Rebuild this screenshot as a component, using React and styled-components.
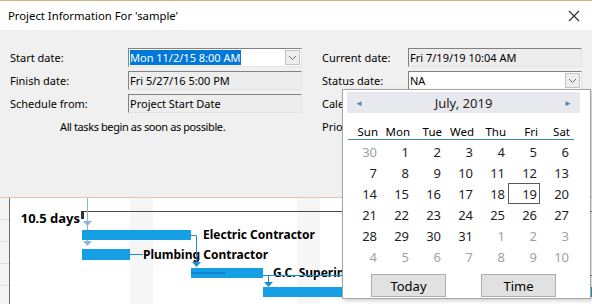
import styled, { createGlobalStyle } from 'styled-components';

const GlobalStyle = createGlobalStyle`
  html, body {
    margin: 0;
    padding: 0;
    background: #ffffff;
  }
  body {
    font-family: 'Noto Sans', 'Open Sans', sans-serif;
    font-size: 11px;
    color: #000000;
  }
`;

const Page = styled.div`
  position: relative;
  width: 592px;
  height: 304px;
  overflow: hidden;
  display: flex;
  flex-direction: column;
  background: #ffffff;
`;

const TopEdge = styled.div`
  height: 1px;
  background: #cdb57c;
`;

const TitleBar = styled.div`
  height: 29px;
  display: flex;
  align-items: center;
  justify-content: space-between;
  padding: 0 8px 0 8px;
  background: #ffffff;
`;

const Title = styled.span`
  font-size: 11.3px;
  color: #000000;
`;

const CloseButton = styled.div`
  width: 20px;
  height: 20px;
  display: flex;
  align-items: center;
  justify-content: center;
`;

const Body = styled.div`
  height: 151px;
  background: #f0f0f0;
  border-bottom: 1px solid #e6c3ad;
  padding: 16px 0 0 10px;
  display: flex;
  gap: 20px;
`;

const Column = styled.div`
  width: ${props => props.$width}px;
  display: flex;
  flex-direction: column;
`;

const Row = styled.div`
  height: 23px;
  display: flex;
  align-items: center;
`;

const Label = styled.div`
  width: ${props => props.$width}px;
  flex: none;
  white-space: nowrap;
`;

const Field = styled.div`
  box-sizing: border-box;
  width: 174px;
  height: 19px;
  display: flex;
  align-items: center;
  padding-left: 1px;
  border-top: 1px solid #828282;
  border-left: 1px solid #828282;
  border-right: 1px solid #e3e3e3;
  border-bottom: 1px solid #e3e3e3;
  background: ${props => (props.$disabled ? '#ededed' : '#ffffff')};
  white-space: nowrap;
`;

const FieldText = styled.span`
  flex: 1;
  overflow: hidden;
`;

const Selected = styled.span`
  background: #0078d7;
  color: #ffffff;
  padding: 0 1px 1px 0;
`;

const DropButton = styled.div`
  box-sizing: border-box;
  width: 15px;
  height: 15px;
  margin-right: 1px;
  border: 1px solid #c4c4c4;
  background: #eeeeee;
  display: flex;
  align-items: center;
  justify-content: center;
`;

const Note = styled.div`
  height: 23px;
  display: flex;
  align-items: center;
  padding-left: 50px;
  white-space: nowrap;
  letter-spacing: -0.4px;
`;

const Gantt = styled.div`
  flex: 1;
  display: flex;
  background: #ffffff;
`;

const GridStub = styled.div`
  width: 9px;
  flex: none;
  border-right: 1px solid #6b6b6b;
  background: repeating-linear-gradient(
    to bottom,
    #f4f4f4 0px,
    #f4f4f4 21px,
    #dedede 21px,
    #dedede 22px
  );
`;

const Chart = styled.svg`
  display: block;
  flex: 1;
`;

const Popup = styled.div`
  position: absolute;
  left: 342px;
  top: 89px;
  box-sizing: border-box;
  width: 249px;
  height: 210px;
  border: 1px solid #a5a5a5;
  background: #ffffff;
  box-shadow: 2px 2px 4px rgba(0, 0, 0, 0.18);
  padding: 2px 0 0 4px;
  font-size: 13px;
`;

const CalHeader = styled.div`
  width: 233px;
  height: 21px;
  background: #e8e9ee;
  display: flex;
  align-items: center;
  justify-content: space-between;
  padding: 0 8px;
  box-sizing: border-box;
  color: #1e1e1e;
`;

const Arrow = styled.span`
  font-size: 8px;
  color: #5a82b4;
`;

const DayNames = styled.div`
  margin: 11px 0 0 1px;
  width: 226px;
  height: 15px;
  border-bottom: 1px solid #3d8aa1;
  display: grid;
  grid-template-columns: repeat(7, 32px);
  align-items: center;
  font-size: 11.5px;
`;

const DayName = styled.div`
  text-align: right;
  padding-right: 2px;
  line-height: 15px;
`;

const DaysGrid = styled.div`
  margin: 1px 0 0 1px;
  display: grid;
  grid-template-columns: repeat(7, 32px);
  grid-auto-rows: 21px;
`;

const Day = styled.div`
  box-sizing: border-box;
  display: flex;
  align-items: center;
  justify-content: flex-end;
  padding-right: 2px;
  color: ${props => (props.$muted ? '#a0a0a0' : '#1e1e1e')};
  border: 1px solid ${props => (props.$current ? '#5a5a5a' : 'transparent')};
`;

const ButtonRow = styled.div`
  margin: 7px 0 0 24px;
  display: flex;
  gap: 35px;
`;

const Button = styled.div`
  box-sizing: border-box;
  width: 75px;
  height: 23px;
  border: 1px solid #adadad;
  background: #e1e1e1;
  display: flex;
  align-items: center;
  justify-content: center;
`;

const Chevron = () => (
  <svg width="9" height="6" viewBox="0 0 9 6">
    <path d="M1 1 L4.5 4.5 L8 1" fill="none" stroke="#6d6d6d" strokeWidth="1" />
  </svg>
);

const dayNames = ['Sun', 'Mon', 'Tue', 'Wed', 'Thu', 'Fri', 'Sat'];

function buildDays() {
  const days = [{ n: 30, muted: true }];
  for (let i = 1; i <= 31; i++) days.push({ n: i, muted: false, current: i === 19 });
  for (let i = 1; i <= 10; i++) days.push({ n: i, muted: true });
  return days;
}

const barColor = '#179fe6';
const linkColor = '#1a8fd6';
const labelFont = "'Noto Sans', sans-serif";

function GanttChart() {
  return (
    <Chart width="582" height="106" viewBox="0 0 582 106">
      <rect x="120" y="0" width="23" height="106" fill="#f6f6f6" />
      <rect x="287" y="0" width="23" height="106" fill="#f6f6f6" />
      <line x1="72" y1="13.5" x2="582" y2="13.5" stroke="#4a4a4a" strokeWidth="1" />
      <rect x="71" y="13" width="3" height="8" fill="#333333" />
      <text x="70" y="25" textAnchor="end" fontSize="13" fontWeight="700" fontFamily={labelFont}>
        10.5 days
      </text>

      <line x1="77.5" y1="0" x2="77.5" y2="45" stroke="#8db4e0" strokeWidth="1" />
      <polygon points="73,23 82,23 77.5,28" fill="#8db4e0" />
      <polygon points="73,43 82,43 77.5,48" fill="#8db4e0" />

      <rect x="72" y="32" width="109" height="10" fill={barColor} />
      <text x="193" y="41" fontSize="12" fontWeight="700" fontFamily={labelFont}>
        Electric Contractor
      </text>

      <rect x="72" y="51" width="48" height="11" fill={barColor} />
      <line x1="120" y1="56.5" x2="133" y2="56.5" stroke={linkColor} strokeWidth="1" />
      <text x="133" y="61" fontSize="12" fontWeight="700" fontFamily={labelFont}>
        Plumbing Contractor
      </text>

      <polyline points="181,37.5 186.5,37.5 186.5,64" fill="none" stroke={linkColor} strokeWidth="1" />
      <polygon points="182,64 191,64 186.5,69" fill={linkColor} />

      <rect x="181" y="70" width="72" height="10" fill={barColor} />
      <rect x="181" y="74" width="34" height="2" fill="#0f86cc" />
      <text x="263" y="79" fontSize="12" fontWeight="700" fontFamily={labelFont}>
        G.C. Superintendent
      </text>
      <line x1="253" y1="77.5" x2="582" y2="77.5" stroke={linkColor} strokeWidth="1" />
      <line x1="258.5" y1="77.5" x2="258.5" y2="84" stroke={linkColor} strokeWidth="1" />
      <polygon points="254,84 263,84 258.5,89" fill={linkColor} />

      <rect x="253" y="89" width="329" height="10" fill={barColor} />
    </Chart>
  );
}

export default function App() {
  const days = buildDays();

  return (
    <>
      <GlobalStyle />
      <Page>
        <TopEdge />
        <TitleBar>
          <Title>Project Information For 'sample'</Title>
          <CloseButton>
            <svg width="12" height="12" viewBox="0 0 12 12">
              <path d="M1 1 L11 11 M11 1 L1 11" stroke="#2b2b2b" strokeWidth="1.1" />
            </svg>
          </CloseButton>
        </TitleBar>

        <Body>
          <Column $width={292}>
            <Row>
              <Label $width={118}>Start date:</Label>
              <Field>
                <FieldText>
                  <Selected>Mon 11/2/15 8:00 AM</Selected>
                </FieldText>
                <DropButton>
                  <Chevron />
                </DropButton>
              </Field>
            </Row>
            <Row>
              <Label $width={118}>Finish date:</Label>
              <Field $disabled>
                <FieldText>Fri 5/27/16 5:00 PM</FieldText>
              </Field>
            </Row>
            <Row>
              <Label $width={118}>Schedule from:</Label>
              <Field $disabled>
                <FieldText>Project Start Date</FieldText>
              </Field>
            </Row>
            <Note>All tasks begin as soon as possible.</Note>
          </Column>

          <Column $width={260}>
            <Row>
              <Label $width={86}>Current date:</Label>
              <Field $disabled>
                <FieldText>Fri 7/19/19 10:04 AM</FieldText>
              </Field>
            </Row>
            <Row>
              <Label $width={86}>Status date:</Label>
              <Field>
                <FieldText>NA</FieldText>
                <DropButton>
                  <Chevron />
                </DropButton>
              </Field>
            </Row>
            {/* calendar and priority rows sit under the date popup */}
            <Row>
              <Label $width={20}>Cale</Label>
            </Row>
            <Row>
              <Label $width={20}>Prio</Label>
            </Row>
          </Column>
        </Body>

        <Gantt>
          <GridStub />
          <GanttChart />
        </Gantt>

        <Popup>
          <CalHeader>
            <Arrow>◄</Arrow>
            <span>July, 2019</span>
            <Arrow>►</Arrow>
          </CalHeader>
          <DayNames>
            {dayNames.map(name => (
              <DayName key={name}>{name}</DayName>
            ))}
          </DayNames>
          <DaysGrid>
            {days.map((d, index) => (
              <Day key={index} $muted={d.muted} $current={d.current}>
                {d.n}
              </Day>
            ))}
          </DaysGrid>
          <ButtonRow>
            <Button>Today</Button>
            <Button>Time</Button>
          </ButtonRow>
        </Popup>
      </Page>
    </>
  );
}
